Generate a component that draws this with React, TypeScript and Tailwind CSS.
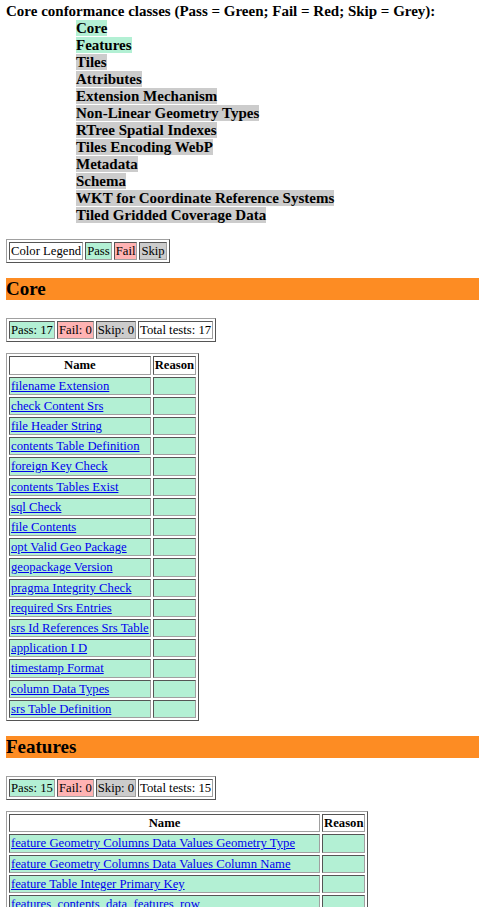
import React from "react";

const GREEN = "bg-[#b3f0d4]";

const classes: { name: string; pass: boolean }[] = [
  { name: "Core", pass: true },
  { name: "Features", pass: true },
  { name: "Tiles", pass: false },
  { name: "Attributes", pass: false },
  { name: "Extension Mechanism", pass: false },
  { name: "Non-Linear Geometry Types", pass: false },
  { name: "RTree Spatial Indexes", pass: false },
  { name: "Tiles Encoding WebP", pass: false },
  { name: "Metadata", pass: false },
  { name: "Schema", pass: false },
  { name: "WKT for Coordinate Reference Systems", pass: false },
  { name: "Tiled Gridded Coverage Data", pass: false },
];

const coreTests = [
  "filename Extension",
  "check Content Srs",
  "file Header String",
  "contents Table Definition",
  "foreign Key Check",
  "contents Tables Exist",
  "sql Check",
  "file Contents",
  "opt Valid Geo Package",
  "geopackage Version",
  "pragma Integrity Check",
  "required Srs Entries",
  "srs Id References Srs Table",
  "application I D",
  "timestamp Format",
  "column Data Types",
  "srs Table Definition",
];

const featureTests = [
  "feature Geometry Columns Data Values Geometry Type",
  "feature Geometry Columns Data Values Column Name",
  "feature Table Integer Primary Key",
  "features_contents_data_features_row",
  "feature Geometry Columns Table Definition",
  "feature Geometry Columns Data Values Srs Id",
  "feature Geometry Columns Data Values Z",
  "feature Geometry Columns Data Values M",
  "feature Geometry Encoding",
  "feature Table One Geometry Column",
  "feature Geometry Columns Foreign Key",
  "feature Geometry Srs Id",
  "feature Geometry Type",
  "feature Contents Data Type",
  "feature Table Definition",
];

const tableCls =
  "border-separate border-spacing-0.5 border border-solid border-t-[#a0a0a0] border-l-[#a0a0a0] border-r-[#555555] border-b-[#555555] text-[12.7px]";
const cellCls =
  "border border-solid border-t-[#555555] border-l-[#555555] border-r-[#a0a0a0] border-b-[#a0a0a0] p-px leading-[14.2px]";

function Stats({ pass, fail, skip, total }: { pass: number; fail: number; skip: number; total: number }) {
  return (
    <table className={`${tableCls} mt-[18px]`}>
      <tbody>
        <tr>
          <td className={`${cellCls} ${GREEN}`}>Pass: {pass}</td>
          <td className={`${cellCls} bg-[#ffb3b3]`}>Fail: {fail}</td>
          <td className={`${cellCls} bg-[#cccccc]`}>Skip: {skip}</td>
          <td className={`${cellCls} bg-white`}>Total tests: {total}</td>
        </tr>
      </tbody>
    </table>
  );
}

function Tests({ tests, nameWidth }: { tests: string[]; nameWidth?: string }) {
  return (
    <table className={`${tableCls} mt-[11px]`}>
      <tbody>
        <tr>
          <th className={`${cellCls} font-bold text-center ${nameWidth ?? ""}`}>Name</th>
          <th className={`${cellCls} font-bold text-center`}>Reason</th>
        </tr>
        {tests.map((t) => (
          <tr key={t}>
            <td className={`${cellCls} ${GREEN} text-left`}>
              <a href="#" className="text-[#0000ee] underline">
                {t}
              </a>
            </td>
            <td className={`${cellCls} ${GREEN}`}></td>
          </tr>
        ))}
      </tbody>
    </table>
  );
}

function Section({ title, tests, nameWidth }: { title: string; tests: string[]; nameWidth?: string }) {
  return (
    <div>
      <h2 className="mt-[15px] bg-[#fd8c23] h-[22px] leading-[22px] text-[19px] font-bold text-black">{title}</h2>
      <Stats pass={tests.length} fail={0} skip={0} total={tests.length} />
      <Tests tests={tests} nameWidth={nameWidth} />
    </div>
  );
}

export default function App() {
  return (
    <div className="font-['Liberation_Serif','Times_New_Roman',serif] text-black bg-white pl-[6px] pr-[8px] pt-[3px] pb-4 min-h-screen">
      <div className="text-[15px] font-bold leading-[17px]">
        Core conformance classes (Pass = Green; Fail = Red; Skip = Grey):
      </div>
      <div className="ml-[70px] text-[15px] font-bold leading-[17px]">
        {classes.map((c) => (
          <div key={c.name}>
            <span className={c.pass ? GREEN : "bg-[#cccccc]"}>{c.name}</span>
          </div>
        ))}
      </div>
      <table className={`${tableCls} mt-[15px]`}>
        <tbody>
          <tr>
            <td className={`${cellCls} bg-white`}>Color Legend</td>
            <td className={`${cellCls} ${GREEN}`}>Pass</td>
            <td className={`${cellCls} bg-[#ffb3b3]`}>Fail</td>
            <td className={`${cellCls} bg-[#cccccc]`}>Skip</td>
          </tr>
        </tbody>
      </table>
      <Section title="Core" tests={coreTests} />
      <Section title="Features" tests={featureTests} nameWidth="w-[311px]" />
    </div>
  );
}
